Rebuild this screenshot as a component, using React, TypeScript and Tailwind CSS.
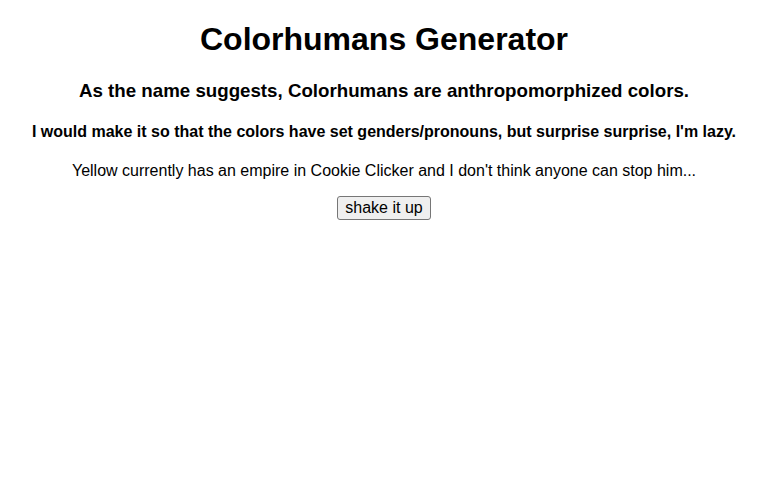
export default function App() {
  return (
    <div className="text-center text-black bg-white" style={{}}>
      <div className="font-['Liberation_Sans',Arial,sans-serif] pt-[21.44px]">
        <h1 className="text-[32px] font-bold leading-[normal]">Colorhumans Generator</h1>
        <h3 className="text-[18.72px] font-bold leading-[normal] mt-[21.44px]">
          As the name suggests, Colorhumans are anthropomorphized colors.
        </h3>
        <h4 className="text-[16px] font-bold leading-[normal] mt-[21.28px]">
          I would make it so that the colors have set genders/pronouns, but surprise surprise, I'm lazy.
        </h4>
        <p className="text-[16px] leading-[normal] mt-[21.28px]">
          Yellow currently has an empire in Cookie Clicker and I don't think anyone can stop him...
        </p>
        <div className="mt-[16px]">
          <button className="text-[16px] leading-[normal] bg-[#efefef] border border-[#767676] rounded-[3px] px-[7px] py-[2px] text-black">
            shake it up
          </button>
        </div>
      </div>
    </div>
  );
}
